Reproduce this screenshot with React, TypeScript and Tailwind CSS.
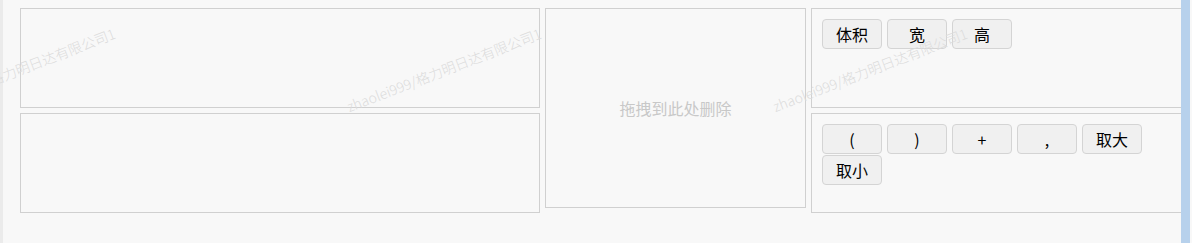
import React from "react";

const font = { fontFamily: '"Noto Sans CJK SC", "Noto Sans", sans-serif' };

function Btn({ label }: { label: string }) {
  return (
    <button className="w-[60px] h-[30px] mr-[5px] mb-px rounded-[4px] border border-[#d4d4d4] bg-[#f0f0f0] text-[16px] leading-none text-black flex items-center justify-center">
      {label}
    </button>
  );
}

const marks = [
  { x: "left-[18px]" },
  { x: "left-[444px]" },
  { x: "left-[870px]" },
];

export default function App() {
  return (
    <div className="relative w-[1192px] h-[243px] bg-[#f8f8f8] overflow-hidden" style={font}>
      <div className="flex h-full">
        <div className="w-[3px] bg-[#ebebeb]" />
        <div className="flex pl-[17px] pt-[8px] flex-1 gap-[5px]">
          {/* formula rows */}
          <div className="w-[520px] flex flex-col gap-[5px]">
            <div className="h-[100px] border border-[#d0d0d0]" />
            <div className="h-[100px] border border-[#d0d0d0]" />
          </div>

          {/* delete drop zone */}
          <div className="w-[261px] h-[200px] border border-[#d0d0d0] flex items-center justify-center text-[16px] text-[#c8c8c8]">
            拖拽到此处删除
          </div>

          {/* fields / operators */}
          <div className="flex-1 flex flex-col gap-[5px]">
            <div className="h-[100px] border border-r-0 border-[#d0d0d0] pl-[10px] pt-[10px] flex flex-wrap content-start">
              <Btn label="体积" />
              <Btn label="宽" />
              <Btn label="高" />
            </div>
            <div className="h-[100px] border border-r-0 border-[#d0d0d0] pl-[10px] pt-[10px] flex flex-wrap content-start">
              <Btn label="(" />
              <Btn label=")" />
              <Btn label="+" />
              <Btn label="," />
              <Btn label="取大" />
              <Btn label="取小" />
            </div>
          </div>
        </div>
        <div className="w-[9px] bg-[#b7d1ec]" />
        <div className="w-[2px]" />
      </div>

      {/* watermark */}
      <div className="absolute inset-0 pointer-events-none">
        {marks.map((m, i) => (
          <span
            key={i}
            className={`absolute ${m.x} top-[70px] -translate-x-1/2 -translate-y-1/2 -rotate-[21deg] whitespace-nowrap text-[14px] font-light text-[#dcdcdc]`}
          >
            zhaolei999/格力明日达有限公司1
          </span>
        ))}
      </div>
    </div>
  );
}
